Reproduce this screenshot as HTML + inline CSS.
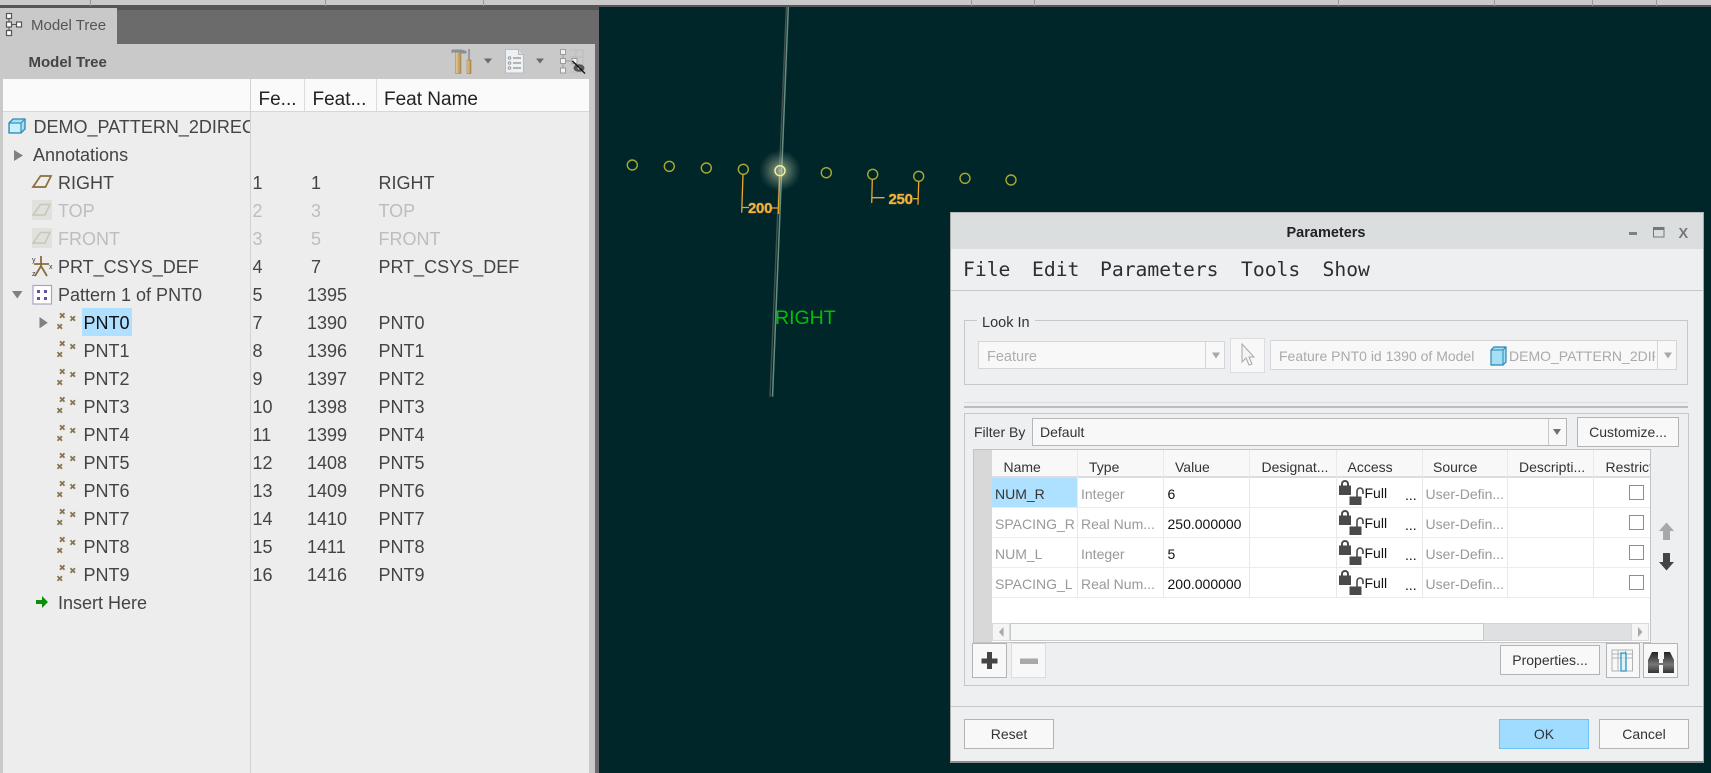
<!DOCTYPE html>
<html><head><meta charset="utf-8">
<style>
html,body{margin:0;padding:0;width:1711px;height:773px;overflow:hidden;background:#012629}
body{position:relative;font-family:"Liberation Sans",sans-serif}
.b{position:absolute;box-sizing:border-box}
.t{position:absolute;white-space:nowrap;line-height:20px;height:20px}
.tr{font-size:18px;color:#444}
.d{color:#bdbdbd}
.h{font-size:19px;color:#222;line-height:24px;height:24px;top:88px}
.dg{font-size:14px;color:#333}
.g{color:#999}
.k{color:#111}
.btn{position:absolute;box-sizing:border-box;background:#f8f8f8;border:1px solid #b4b4b4;font-size:14px;color:#333;text-align:center}
.m{font-family:"DejaVu Sans Mono",monospace;font-size:19.7px;color:#2e2e2e;top:260px}
.tick{position:absolute;top:0;width:1px;height:6px;background:#999}
.dim{font-size:15px;font-weight:bold;color:#f6b03c;letter-spacing:-.3px;text-shadow:0 0 1px #f6b03c}
</style></head>
<body>
<!-- top strip -->
<div class="b" style="left:0;top:0;width:1711px;height:5px;background:#c9c9c9"></div>
<div class="b" style="left:0;top:5px;width:1711px;height:2px;background:#555"></div>
<div class="tick" style="left:90px"></div><div class="tick" style="left:325px"></div><div class="tick" style="left:483px"></div>
<div class="tick" style="left:971px"></div><div class="tick" style="left:1034px"></div><div class="tick" style="left:1338px"></div>
<div class="tick" style="left:1494px"></div><div class="tick" style="left:1592px"></div><div class="tick" style="left:1656px"></div>

<!-- left panel -->
<div class="b" style="left:0;top:7px;width:599px;height:766px;background:#6b6b6b"></div>
<div class="b" style="left:0;top:7px;width:599px;height:3px;background:#555"></div>
<div class="b" style="left:0;top:8px;width:117px;height:36px;background:#c9c9c9"></div>
<div class="b" style="left:0;top:44px;width:595px;height:729px;background:#c9c9c9"></div>
<div class="b" style="left:3px;top:79px;width:586px;height:694px;background:#ededed"></div>
<div class="b" style="left:3px;top:79px;width:586px;height:33px;background:#fafafa;border-bottom:1px solid #d6d6d6"></div>
<div class="b" style="left:250px;top:79px;width:1px;height:694px;background:#d2d2d2"></div>
<div class="b" style="left:304px;top:79px;width:1px;height:32px;background:#ddd"></div>
<div class="b" style="left:376px;top:79px;width:1px;height:32px;background:#ddd"></div>
<div class="b" style="left:82px;top:308px;width:50px;height:28px;background:#b0e0ff"></div>

<div class="t" style="left:31px;top:16px;font-size:15px;color:#555">Model Tree</div>
<div class="t" style="left:28.5px;top:53px;font-size:15px;font-weight:bold;color:#444">Model Tree</div>

<div class="t h" style="left:258.5px">Fe...</div>
<div class="t h" style="left:312.5px">Feat...</div>
<div class="t h" style="left:384px">Feat Name</div>

<div class="t tr" style="left:33.5px;top:117px;width:216px;overflow:hidden">DEMO_PATTERN_2DIRECTION</div>
<div class="t tr" style="left:33px;top:145px">Annotations</div>

<div class="t tr" style="left:58px;top:173px">RIGHT</div><div class="t tr" style="left:252.5px;top:173px">1</div><div class="t tr" style="left:311px;top:173px">1</div><div class="t tr" style="left:378.5px;top:173px">RIGHT</div>
<div class="t tr d" style="left:58px;top:201px">TOP</div><div class="t tr d" style="left:252.5px;top:201px">2</div><div class="t tr d" style="left:311px;top:201px">3</div><div class="t tr d" style="left:378.5px;top:201px">TOP</div>
<div class="t tr d" style="left:58px;top:229px">FRONT</div><div class="t tr d" style="left:252.5px;top:229px">3</div><div class="t tr d" style="left:311px;top:229px">5</div><div class="t tr d" style="left:378.5px;top:229px">FRONT</div>
<div class="t tr" style="left:58px;top:257px">PRT_CSYS_DEF</div><div class="t tr" style="left:252.5px;top:257px">4</div><div class="t tr" style="left:311px;top:257px">7</div><div class="t tr" style="left:378.5px;top:257px">PRT_CSYS_DEF</div>
<div class="t tr" style="left:58px;top:285px">Pattern 1 of PNT0</div><div class="t tr" style="left:252.5px;top:285px">5</div><div class="t tr" style="left:307px;top:285px">1395</div>

<div class="t tr" style="left:83.5px;top:313px;color:#111">PNT0</div><div class="t tr" style="left:252.5px;top:313px">7</div><div class="t tr" style="left:307px;top:313px">1390</div><div class="t tr" style="left:378.5px;top:313px">PNT0</div>
<div class="t tr" style="left:83.5px;top:341px">PNT1</div><div class="t tr" style="left:252.5px;top:341px">8</div><div class="t tr" style="left:307px;top:341px">1396</div><div class="t tr" style="left:378.5px;top:341px">PNT1</div>
<div class="t tr" style="left:83.5px;top:369px">PNT2</div><div class="t tr" style="left:252.5px;top:369px">9</div><div class="t tr" style="left:307px;top:369px">1397</div><div class="t tr" style="left:378.5px;top:369px">PNT2</div>
<div class="t tr" style="left:83.5px;top:397px">PNT3</div><div class="t tr" style="left:252.5px;top:397px">10</div><div class="t tr" style="left:307px;top:397px">1398</div><div class="t tr" style="left:378.5px;top:397px">PNT3</div>
<div class="t tr" style="left:83.5px;top:425px">PNT4</div><div class="t tr" style="left:252.5px;top:425px">11</div><div class="t tr" style="left:307px;top:425px">1399</div><div class="t tr" style="left:378.5px;top:425px">PNT4</div>
<div class="t tr" style="left:83.5px;top:453px">PNT5</div><div class="t tr" style="left:252.5px;top:453px">12</div><div class="t tr" style="left:307px;top:453px">1408</div><div class="t tr" style="left:378.5px;top:453px">PNT5</div>
<div class="t tr" style="left:83.5px;top:481px">PNT6</div><div class="t tr" style="left:252.5px;top:481px">13</div><div class="t tr" style="left:307px;top:481px">1409</div><div class="t tr" style="left:378.5px;top:481px">PNT6</div>
<div class="t tr" style="left:83.5px;top:509px">PNT7</div><div class="t tr" style="left:252.5px;top:509px">14</div><div class="t tr" style="left:307px;top:509px">1410</div><div class="t tr" style="left:378.5px;top:509px">PNT7</div>
<div class="t tr" style="left:83.5px;top:537px">PNT8</div><div class="t tr" style="left:252.5px;top:537px">15</div><div class="t tr" style="left:307px;top:537px">1411</div><div class="t tr" style="left:378.5px;top:537px">PNT8</div>
<div class="t tr" style="left:83.5px;top:565px">PNT9</div><div class="t tr" style="left:252.5px;top:565px">16</div><div class="t tr" style="left:307px;top:565px">1416</div><div class="t tr" style="left:378.5px;top:565px">PNT9</div>
<div class="t tr" style="left:58px;top:593px">Insert Here</div>

<!-- 3D labels -->
<div class="t" style="left:775px;top:307.500px;font-size:19.5px;color:#00c000">RIGHT</div>
<div class="t dim" style="left:748px;top:199px">200</div>
<div class="t dim" style="left:888.5px;top:190px">250</div>

<!-- dialog -->
<div class="b" style="left:950px;top:212px;width:754px;height:551px;background:#eeeff1;border:1px solid #a8a8a8;border-top-color:#b5b5b5;border-bottom:2px solid #8c8c8c"></div>
<div class="b" style="left:951px;top:213px;width:752px;height:36px;background:#dbdedf"></div>
<div class="t" style="left:1286px;top:223px;width:80px;text-align:center;font-size:14.5px;font-weight:bold;color:#222">Parameters</div>

<div class="t m" style="left:963px">File</div>
<div class="t m" style="left:1032px">Edit</div>
<div class="t m" style="left:1100px">Parameters</div>
<div class="t m" style="left:1241px">Tools</div>
<div class="t m" style="left:1322.5px">Show</div>
<div class="b" style="left:951px;top:290px;width:752px;height:1px;background:#c8c9cb"></div>

<!-- look in -->
<div class="b" style="left:964px;top:320px;width:724px;height:65px;border:1px solid #c6c7c9"></div>
<div class="t dg" style="left:977px;top:313px;background:#eeeff1;padding:0 5px;font-size:14.5px">Look In</div>
<div class="b" style="left:978px;top:341px;width:247px;height:28px;background:#f8f8f8;border:1px solid #d4d5d7"></div>
<div class="b" style="left:1205px;top:342px;width:1px;height:26px;background:#d4d5d7"></div>
<div class="t dg d" style="left:987px;top:346.500px;font-size:14.5px;color:#aeaeae">Feature</div>
<div class="b" style="left:1230px;top:338px;width:35px;height:35px;background:#f8f8f8;border:1px solid #dcdde0"></div>
<div class="b" style="left:1270px;top:340px;width:407px;height:30px;background:#f8f8f8;border:1px solid #d4d5d7"></div>
<div class="b" style="left:1657px;top:341px;width:1px;height:28px;background:#d4d5d7"></div>
<div class="t dg" style="left:1279px;top:346px;color:#aaa">Feature PNT0 id 1390 of Model</div>
<div class="t dg" style="left:1509px;top:346px;width:146px;overflow:hidden;color:#aaa">DEMO_PATTERN_2DIRECTION</div>

<div class="b" style="left:964px;top:402px;width:724px;height:1px;background:#dcdde0"></div>
<div class="b" style="left:964px;top:406px;width:724px;height:2px;background:#bcbdbf"></div>

<!-- lower group -->
<div class="b" style="left:964px;top:413px;width:725px;height:273px;border:1px solid #c6c7c9"></div>
<div class="t dg" style="left:974px;top:422px">Filter By</div>
<div class="b" style="left:1032px;top:418px;width:535px;height:28px;background:#f8f8f8;border:1px solid #b5b6b8"></div>
<div class="b" style="left:1548px;top:419px;width:1px;height:26px;background:#c8c9cb"></div>
<div class="t dg" style="left:1040px;top:422px">Default</div>
<div class="btn" style="left:1577px;top:417px;width:102px;height:30px;line-height:28px">Customize...</div>

<!-- table -->
<div class="b" style="left:973px;top:449px;width:678px;height:194px;background:#fff;border:1px solid #c2c3c5"></div>
<div class="b" style="left:974px;top:450px;width:18px;height:192px;background:#d8d8d8"></div>
<div class="b" style="left:992px;top:450px;width:658px;height:28px;background:#f8f8f8;border-bottom:2px solid #dcdcde"></div>
<div class="b" style="left:992px;top:478px;width:85px;height:29px;background:#aee0ff"></div>
<div class="b" style="left:992px;top:507px;width:658px;height:1px;background:#ececec"></div>
<div class="b" style="left:992px;top:537px;width:658px;height:1px;background:#ececec"></div>
<div class="b" style="left:992px;top:567px;width:658px;height:1px;background:#ececec"></div>
<div class="b" style="left:992px;top:597px;width:658px;height:1px;background:#ececec"></div>
<div class="b" style="left:1077px;top:450px;width:1px;height:148px;background:#e9e9e9"></div>
<div class="b" style="left:1163px;top:450px;width:1px;height:148px;background:#e9e9e9"></div>
<div class="b" style="left:1249px;top:450px;width:1px;height:148px;background:#e9e9e9"></div>
<div class="b" style="left:1336px;top:450px;width:1px;height:148px;background:#e9e9e9"></div>
<div class="b" style="left:1422px;top:450px;width:1px;height:148px;background:#e9e9e9"></div>
<div class="b" style="left:1507px;top:450px;width:1px;height:148px;background:#e9e9e9"></div>
<div class="b" style="left:1593px;top:450px;width:1px;height:148px;background:#e9e9e9"></div>

<div class="t dg" style="left:1003.5px;top:457px">Name</div>
<div class="t dg" style="left:1089px;top:457px">Type</div>
<div class="t dg" style="left:1175px;top:457px">Value</div>
<div class="t dg" style="left:1261.5px;top:457px">Designat...</div>
<div class="t dg" style="left:1347.5px;top:457px">Access</div>
<div class="t dg" style="left:1433px;top:457px">Source</div>
<div class="t dg" style="left:1519px;top:457px">Descripti...</div>
<div class="t dg" style="left:1605.5px;top:457px;width:44px;overflow:hidden">Restriction</div>

<div class="t dg" style="left:995px;top:484px">NUM_R</div>
<div class="t dg g" style="left:1081px;top:484px">Integer</div>
<div class="t dg k" style="left:1167.5px;top:484px">6</div>
<div class="t dg k" style="left:1364.5px;top:483px">Full</div><div class="t dg k" style="left:1405px;top:485px">...</div>
<div class="t dg g" style="left:1425.5px;top:484px">User-Defin...</div>

<div class="t dg g" style="left:995px;top:514px">SPACING_R</div>
<div class="t dg g" style="left:1081px;top:514px">Real Num...</div>
<div class="t dg k" style="left:1167.5px;top:514px">250.000000</div>
<div class="t dg k" style="left:1364.5px;top:513px">Full</div><div class="t dg k" style="left:1405px;top:515px">...</div>
<div class="t dg g" style="left:1425.5px;top:514px">User-Defin...</div>

<div class="t dg g" style="left:995px;top:544px">NUM_L</div>
<div class="t dg g" style="left:1081px;top:544px">Integer</div>
<div class="t dg k" style="left:1167.5px;top:544px">5</div>
<div class="t dg k" style="left:1364.5px;top:543px">Full</div><div class="t dg k" style="left:1405px;top:545px">...</div>
<div class="t dg g" style="left:1425.5px;top:544px">User-Defin...</div>

<div class="t dg g" style="left:995px;top:574px">SPACING_L</div>
<div class="t dg g" style="left:1081px;top:574px">Real Num...</div>
<div class="t dg k" style="left:1167.5px;top:574px">200.000000</div>
<div class="t dg k" style="left:1364.5px;top:573px">Full</div><div class="t dg k" style="left:1405px;top:575px">...</div>
<div class="t dg g" style="left:1425.5px;top:574px">User-Defin...</div>

<div class="b" style="left:1629px;top:485px;width:15px;height:15px;background:#fff;border:1px solid #8e8e8e"></div>
<div class="b" style="left:1629px;top:515px;width:15px;height:15px;background:#fff;border:1px solid #8e8e8e"></div>
<div class="b" style="left:1629px;top:545px;width:15px;height:15px;background:#fff;border:1px solid #8e8e8e"></div>
<div class="b" style="left:1629px;top:575px;width:15px;height:15px;background:#fff;border:1px solid #8e8e8e"></div>

<!-- scrollbar -->
<div class="b" style="left:992px;top:623px;width:657px;height:18px;background:#dfe0e1;border:1px solid #d2d3d5"></div>
<div class="b" style="left:992px;top:623px;width:18px;height:18px;background:#f5f5f6;border:1px solid #d8d9db"></div>
<div class="b" style="left:1010px;top:623px;width:474px;height:18px;background:#f6f7f7;border:1px solid #c8c9cb"></div>
<div class="b" style="left:1631px;top:623px;width:18px;height:18px;background:#f5f5f6;border:1px solid #d8d9db"></div>

<!-- buttons -->
<div class="btn" style="left:972px;top:643px;width:35px;height:35px"></div>
<div class="btn" style="left:1011px;top:643px;width:35px;height:35px;border-color:#dcdde0"></div>
<div class="btn" style="left:1500px;top:645px;width:100px;height:30px;line-height:28px">Properties...</div>
<div class="btn" style="left:1606px;top:643px;width:34px;height:35px"></div>
<div class="btn" style="left:1643px;top:643px;width:35px;height:35px"></div>
<div class="b" style="left:951px;top:706px;width:752px;height:1px;background:#c8c9cb"></div>
<div class="btn" style="left:964px;top:719px;width:90px;height:30px;line-height:28px">Reset</div>
<div class="btn" style="left:1499px;top:719px;width:90px;height:30px;line-height:28px;background:#9fdcff;border-color:#6cc3f2">OK</div>
<div class="btn" style="left:1599px;top:719px;width:90px;height:30px;line-height:28px">Cancel</div>

<!-- icons & graphics -->
<svg class="b" style="left:0;top:0" width="1711" height="773" viewBox="0 0 1711 773" xmlns="http://www.w3.org/2000/svg">
<defs>
<radialGradient id="glow"><stop offset="0" stop-color="#fffbd0" stop-opacity=".6"/><stop offset=".55" stop-color="#c8d8b0" stop-opacity=".28"/><stop offset="1" stop-color="#8aa" stop-opacity="0"/></radialGradient>
<linearGradient id="wood" x1="0" x2="1"><stop offset="0" stop-color="#e8cf9a"/><stop offset="1" stop-color="#b08a4a"/></linearGradient>
<linearGradient id="bin" x1="0" y1="0" x2="0" y2="1"><stop offset="0" stop-color="#222"/><stop offset=".6" stop-color="#777"/><stop offset="1" stop-color="#333"/></linearGradient>
<g id="pts" fill="none" stroke="#8a7550" stroke-width="1.800">
<path d="M60 -9.500l4.500 4.500M64.500 -9.500l-4.500 4.500M70.500 -6.500l4.500 4.500M75 -6.500l-4.500 4.500M57.500 1.500l4.500 4.500M62 1.500l-4.500 4.500"/>
</g>
<g id="lock">
<path d="M1342 486v-2a3 3 0 0 1 6 0v2" fill="none" stroke="#4a4a4a" stroke-width="2"/>
<rect x="1339" y="485.500" width="12" height="9.500" fill="#4a4a4a"/>
<path d="M1357 497v-6a3 3 0 0 1 6 0v3" fill="none" stroke="#4a4a4a" stroke-width="1.600"/>
<rect x="1349.500" y="496.500" width="12" height="8.500" fill="#4a4a4a"/>
</g>
<g id="sq" fill="#fff" stroke="#555" stroke-width="1.200"><rect x="0" y="0" width="5" height="5"/></g>
</defs>

<!-- tab icon -->
<path d="M9 18v12M11.500 24.500h5" stroke="#555" fill="none"/>
<use href="#sq" x="6.500" y="13.500"/><use href="#sq" x="6.500" y="22"/><use href="#sq" x="6.500" y="30.500"/><use href="#sq" x="16.500" y="22"/>

<!-- toolbar: hammer + screwdriver -->
<rect x="455.500" y="52" width="5.500" height="21.500" fill="url(#wood)" stroke="#9c8050" stroke-width=".5"/>
<path d="M451.500 49.500h10l5 1.500v2.500h-5l-1.500-1h-7l-1.500 1z" fill="#8a8f94"/>
<rect x="467" y="60" width="4" height="13.500" fill="url(#wood)" stroke="#9c7030" stroke-width=".5"/>
<rect x="468.300" y="49" width="1.500" height="11" fill="#8c8c8c"/>
<path d="M484 58.500h8l-4 5z" fill="#6a6a6a"/>
<!-- toolbar: doc -->
<path d="M505.500 49.500h13l5 5v18.500h-18z" fill="#eef1f3" stroke="#b8bcc0"/>
<path d="M518.500 49.500v5h5" fill="#d8dcdf" stroke="#b8bcc0"/>
<g fill="none" stroke="#9a9ea2"><circle cx="509.500" cy="58" r="1.300"/><circle cx="509.500" cy="63" r="1.300"/><circle cx="509.500" cy="68" r="1.300"/></g>
<path d="M513 58h8M513 63h8M513 68h8" stroke="#777" stroke-width="1"/>
<path d="M536 58.500h8l-4 5z" fill="#6a6a6a"/>
<!-- toolbar: tree hide -->
<g fill="none" stroke="#bbb"><path d="M570 50h13v22h-13M576 50v22M570 57h13M570 65h13"/></g>
<path d="M563 54v16M566 61h6" stroke="#9a9a9a"/>
<g fill="#f2f2f2" stroke="#9a9a9a"><rect x="560.500" y="49.500" width="5" height="5"/><rect x="560.500" y="58.500" width="5" height="5"/><rect x="560.500" y="68" width="5" height="5"/><rect x="572" y="58.500" width="5" height="5"/></g>
<ellipse cx="579" cy="68" rx="5.500" ry="3.800" fill="#555"/><circle cx="579" cy="68" r="1.500" fill="#ccc"/>
<path d="M572.500 61l12.500 12.500" stroke="#111" stroke-width="1.300"/>

<!-- tree icons -->
<path d="M9 123l4-4h12v10l-4 4H9z" fill="#a5dff5" stroke="#2c86b4" stroke-width="1.300"/>
<path d="M9 123h12l4-4M21 123v10" fill="none" stroke="#2c86b4" stroke-width="1"/>
<rect x="10" y="124" width="10" height="8" fill="#c8effc"/>
<path d="M14 150l9 5.500-9 5.500z" fill="#808080"/>
<path d="M33 187l7.500-11H51l-5.500 11z" fill="none" stroke="#8a6d3b" stroke-width="1.700"/>
<rect x="32" y="200" width="20" height="20" fill="#e0e0de"/>
<path d="M33 215l7.500-10.500H50l-5 10.500z" fill="none" stroke="#c9c6b4" stroke-width="1.500"/>
<rect x="32" y="228" width="20" height="20" fill="#e0e0de"/>
<path d="M33 243l7.500-10.500H50l-5 10.500z" fill="none" stroke="#c9c6b4" stroke-width="1.500"/>
<path d="M41 256v10M41 266l-6 10M41 266l6 10M34 264h15" fill="none" stroke="#8a6d3b" stroke-width="1.800"/>
<text x="32" y="262" font-size="7" fill="#333" font-family="Liberation Sans,sans-serif">y</text>
<text x="32" y="276" font-size="7" fill="#333" font-family="Liberation Sans,sans-serif">z</text>
<text x="49" y="269" font-size="7" fill="#333" font-family="Liberation Sans,sans-serif">x</text>
<path d="M12 291h10.500l-5.250 7.500z" fill="#808080"/>
<rect x="33" y="285.500" width="18.500" height="18.500" fill="#fff" stroke="#b0a0c8" stroke-width="1.200"/>
<g fill="#6b4fa0"><rect x="37" y="290" width="3" height="3"/><rect x="44" y="290" width="3" height="3"/><rect x="37" y="297" width="3" height="3"/><rect x="44" y="297" width="3" height="3"/></g>
<path d="M39.500 317l8.300 5.700-8.300 5.700z" fill="#808080"/>
<use href="#pts" y="322.700"/><use href="#pts" y="350.700"/><use href="#pts" y="378.700"/><use href="#pts" y="406.700"/><use href="#pts" y="434.700"/><use href="#pts" y="462.700"/><use href="#pts" y="490.700"/><use href="#pts" y="518.700"/><use href="#pts" y="546.700"/><use href="#pts" y="574.700"/>
<path d="M36 600h6v-4l6 6-6 6v-4h-6z" fill="#0a8f0a"/>

<!-- 3D view -->
<line x1="786.400" y1="7" x2="770" y2="396.700" stroke="#454f4f" stroke-width="1.500"/>
<line x1="788.300" y1="7" x2="772.500" y2="396.700" stroke="#62907f" stroke-width="1.500"/>
<circle cx="780" cy="170.700" r="21" fill="url(#glow)"/>
<g fill="none" stroke="#a8aa2c" stroke-width="1.400">
<circle cx="632.300" cy="165" r="5"/><circle cx="669.300" cy="166.300" r="5"/><circle cx="706.300" cy="168" r="5"/><circle cx="743.300" cy="169.300" r="5"/>
<circle cx="826.300" cy="172.700" r="5"/><circle cx="872.700" cy="174.300" r="5"/><circle cx="918.700" cy="176.300" r="5"/><circle cx="965" cy="178.300" r="5"/><circle cx="1011" cy="180" r="5"/>
</g>
<circle cx="780" cy="170.700" r="5" fill="none" stroke="#f3ef9a" stroke-width="1.500"/>
<g fill="none" stroke="#eea52f" stroke-width="1.300">
<path d="M743 174.500L741.700 212.700M779.700 176L778.300 214M742 207.500H749M772 208H778"/>
<path d="M872.300 179.500L871.700 203M918.700 181.500L918 204.700M872 197.700H884.500M913 198.700H918"/>
</g>

<!-- window controls -->
<rect x="1629" y="232" width="8" height="3" fill="#808080"/>
<rect x="1653.500" y="227.500" width="10.500" height="9.500" fill="none" stroke="#777"/>
<rect x="1653.500" y="227.500" width="10.500" height="2.500" fill="#777"/>
<text x="1678.500" y="238" font-size="14.500" font-weight="bold" fill="#777" font-family="Liberation Sans,sans-serif">X</text>
<path d="M1212 352.500h8l-4 6z" fill="#a8a8a8"/>
<path d="M1664 352.500h8l-4 6z" fill="#a8a8a8"/>
<path d="M1242 344l0 18 4-4 3 7 3-1-3-7h5z" fill="#f4f4f4" stroke="#a8a8a8" stroke-width="1"/>
<path d="M1491 350l3-3h12v15l-3 3h-12z" fill="#a5dff5" stroke="#2c86b4" stroke-width="1.200"/>
<path d="M1491 350h12v15M1503 350l3-3" fill="none" stroke="#2c86b4"/>
<path d="M1553 429h8l-4 6z" fill="#707070"/>
<!-- locks -->
<use href="#lock"/><use href="#lock" y="30"/><use href="#lock" y="60"/><use href="#lock" y="90"/>
<!-- up/down -->
<path d="M1666.500 522.500l7.500 8.500h-4v9h-7v-9h-4z" fill="#a8a8a8"/>
<path d="M1666.500 570.500l7.500-8.500h-4v-9h-7v9h-4z" fill="#444"/>
<!-- scroll arrows -->
<path d="M1003.500 627l-4.500 5 4.500 5z" fill="#a8a8a8"/>
<path d="M1638 627l4.500 5-4.500 5z" fill="#a8a8a8"/>
<!-- plus/minus -->
<path d="M987 652h5v6.500h5.500v5H992V669h-5v-5.500h-5.500v-5H987z" fill="#444"/>
<rect x="1020" y="658.500" width="18" height="5.500" fill="#a9a9a9"/>
<!-- columns icon -->
<g fill="none" stroke="#b0b3b5"><rect x="1612" y="650" width="20.500" height="21"/><path d="M1612 654h20.500M1612 658h20.500M1618 650v21M1625.500 650v21"/></g>
<rect x="1621" y="653" width="5" height="18" fill="#d6eef8" fill-opacity=".6" stroke="#2f9bc8" stroke-width="1.300"/>
<!-- binoculars -->
<path d="M1652 652h6v7h1v4h4v-4h1v-7h6l4 8v13h-11v-8h-4v8h-11v-13z" fill="url(#bin)"/>
</svg>
</body></html>
